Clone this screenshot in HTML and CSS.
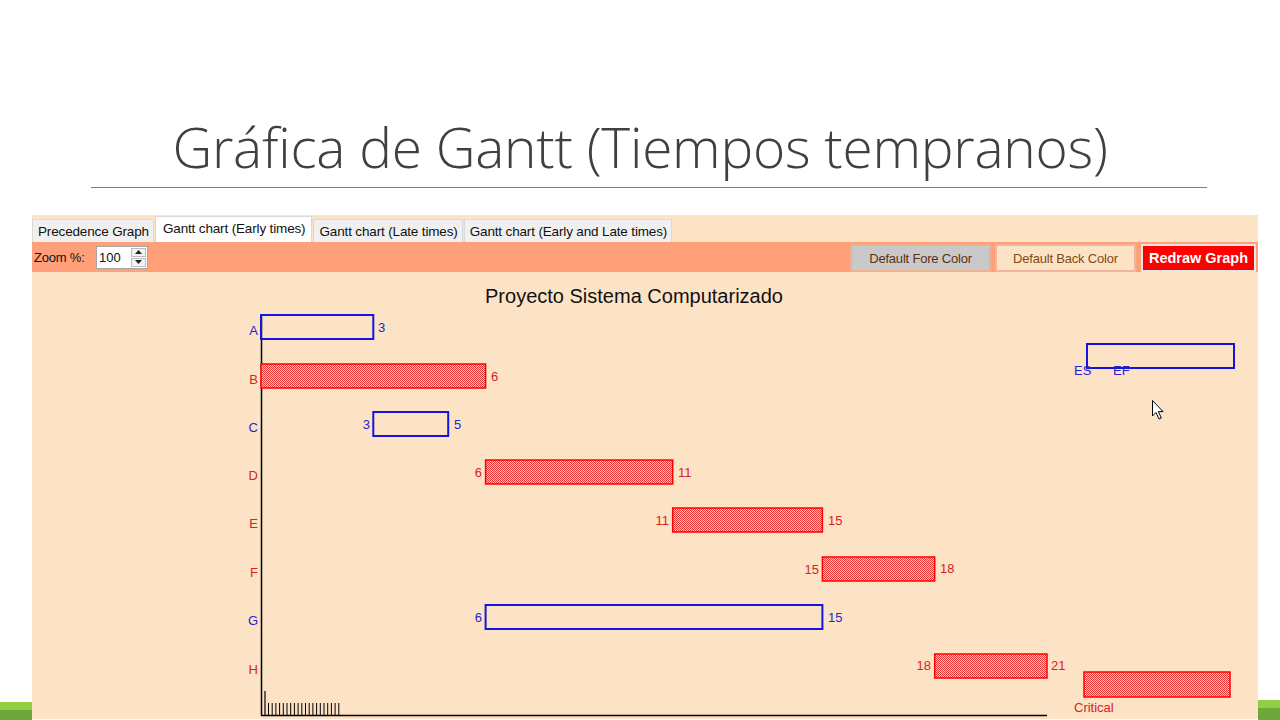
FILE: index.html
```html
<!DOCTYPE html>
<html lang="es">
<head>
<meta charset="utf-8">
<title>Gráfica de Gantt</title>
<link rel="stylesheet" href="styles.css">
</head>
<body>
<header class="slide-head">
  <h1 class="slide-title">Gráfica de Gantt (Tiempos tempranos)</h1>
</header>
<div class="divider"></div>

<section class="app">
  <div class="tabs">
    <div class="tab">Precedence Graph</div>
    <div class="tab tab-active">Gantt chart (Early times)</div>
    <div class="tab">Gantt chart (Late times)</div>
    <div class="tab">Gantt chart (Early and Late times)</div>
  </div>
  <div class="toolbar">
    <span class="zoom-label">Zoom %:</span>
    <div class="spin">
      <span class="spin-value">100</span>
      <div class="spin-btns">
        <span class="spin-btn"><svg width="7" height="4" viewBox="0 0 7 4"><path d="M0 4 L3.5 0 L7 4 Z" fill="#222"/></svg></span>
        <span class="spin-btn"><svg width="7" height="4" viewBox="0 0 7 4"><path d="M0 0 L3.5 4 L7 0 Z" fill="#222"/></svg></span>
      </div>
    </div>
    <div class="tool-spacer"></div>
    <button class="btn btn-fore">Default Fore Color</button>
    <button class="btn btn-back">Default Back Color</button>
    <button class="btn btn-redraw">Redraw Graph</button>
  </div>
  <div class="chart">
    <svg class="chart-svg" width="1226" height="447" viewBox="0 0 1226 447">
      <defs>
        <pattern id="hatch" width="2" height="2" patternUnits="userSpaceOnUse">
          <rect width="2" height="2" fill="#fcc8c0"/>
          <rect x="0" y="0" width="1" height="1" fill="#e63434"/>
          <rect x="1" y="1" width="1" height="1" fill="#e63434"/>
        </pattern>
      </defs>
      <text class="c-title" x="602" y="31" text-anchor="middle">Proyecto Sistema Computarizado</text>

      <!-- axes -->
      <line x1="229.5" y1="43" x2="229.5" y2="443.5" stroke="#000" stroke-width="1.5"/>
      <line x1="229" y1="443.5" x2="1015" y2="443.5" stroke="#000" stroke-width="1.5"/>
      <line x1="233" y1="419" x2="233" y2="443" stroke="#000" stroke-width="1.2"/>
      <g stroke="#000" stroke-width="1">
        <line x1="236.5" y1="431" x2="236.5" y2="443"/>
        <line x1="240.2" y1="431" x2="240.2" y2="443"/>
        <line x1="243.9" y1="431" x2="243.9" y2="443"/>
        <line x1="247.6" y1="431" x2="247.6" y2="443"/>
        <line x1="251.3" y1="431" x2="251.3" y2="443"/>
        <line x1="255" y1="431" x2="255" y2="443"/>
        <line x1="258.7" y1="431" x2="258.7" y2="443"/>
        <line x1="262.4" y1="431" x2="262.4" y2="443"/>
        <line x1="266.1" y1="431" x2="266.1" y2="443"/>
        <line x1="269.8" y1="431" x2="269.8" y2="443"/>
        <line x1="273.5" y1="431" x2="273.5" y2="443"/>
        <line x1="277.2" y1="431" x2="277.2" y2="443"/>
        <line x1="280.9" y1="431" x2="280.9" y2="443"/>
        <line x1="284.6" y1="431" x2="284.6" y2="443"/>
        <line x1="288.3" y1="431" x2="288.3" y2="443"/>
        <line x1="292" y1="431" x2="292" y2="443"/>
        <line x1="295.7" y1="431" x2="295.7" y2="443"/>
        <line x1="299.4" y1="431" x2="299.4" y2="443"/>
        <line x1="303.1" y1="431" x2="303.1" y2="443"/>
        <line x1="306.8" y1="431" x2="306.8" y2="443"/>
      </g>

      <!-- A -->
      <text class="lbl blue" x="226" y="63" text-anchor="end">A</text>
      <rect class="bar-n" x="229" y="43" width="112.3" height="24"/>
      <text class="num blue" x="346" y="60">3</text>
      <!-- B -->
      <text class="lbl red" x="226" y="112" text-anchor="end">B</text>
      <rect class="bar-c" x="229" y="92" width="224.6" height="24"/>
      <text class="num red" x="459" y="109">6</text>
      <!-- C -->
      <text class="lbl blue" x="226" y="160" text-anchor="end">C</text>
      <text class="num blue" x="338" y="157" text-anchor="end">3</text>
      <rect class="bar-n" x="341.3" y="140" width="74.9" height="24"/>
      <text class="num blue" x="422" y="157">5</text>
      <!-- D -->
      <text class="lbl red" x="226" y="208" text-anchor="end">D</text>
      <text class="num red" x="450" y="205" text-anchor="end">6</text>
      <rect class="bar-c" x="453.6" y="188" width="187.1" height="24"/>
      <text class="num red" x="646" y="205">11</text>
      <!-- E -->
      <text class="lbl red" x="226" y="256" text-anchor="end">E</text>
      <text class="num red" x="637" y="253" text-anchor="end">11</text>
      <rect class="bar-c" x="640.7" y="236" width="149.7" height="24"/>
      <text class="num red" x="796" y="253">15</text>
      <!-- F -->
      <text class="lbl red" x="226" y="305" text-anchor="end">F</text>
      <text class="num red" x="787" y="302" text-anchor="end">15</text>
      <rect class="bar-c" x="790.4" y="285" width="112.3" height="24"/>
      <text class="num red" x="908" y="301">18</text>
      <!-- G -->
      <text class="lbl blue" x="226" y="353" text-anchor="end">G</text>
      <text class="num blue" x="450" y="350" text-anchor="end">6</text>
      <rect class="bar-n" x="453.6" y="333" width="336.8" height="24"/>
      <text class="num blue" x="796" y="350">15</text>
      <!-- H -->
      <text class="lbl red" x="226" y="402" text-anchor="end">H</text>
      <text class="num red" x="899" y="398" text-anchor="end">18</text>
      <rect class="bar-c" x="902.7" y="382" width="112.3" height="24"/>
      <text class="num red" x="1019" y="398">21</text>

      <!-- legend -->
      <rect class="bar-n" x="1055" y="72" width="147" height="24"/>
      <text class="num blue" x="1042" y="103">ES</text>
      <text class="num blue" x="1081" y="103">EF</text>
      <rect class="bar-c" x="1052" y="400" width="146" height="25"/>
      <text class="num red" x="1042" y="440">Critical</text>

      <!-- mouse pointer -->
      <path d="M1120.5 128.5 L1120.5 144 L1124 140.5 L1127 147 L1129.3 146 L1126.4 139.6 L1131 139.6 Z" fill="#fff" stroke="#000" stroke-width="1" stroke-linejoin="round"/>
    </svg>
  </div>
</section>

<div class="deco deco-left"></div>
<div class="deco deco-right"></div>
</body>
</html>
```

FILE: styles.css
```css
html, body {
  margin: 0;
  padding: 0;
}
body {
  width: 1280px;
  height: 720px;
  overflow: hidden;
  background: #ffffff;
  position: relative;
  font-family: "Liberation Sans", Arial, sans-serif;
}

.slide-head {
  height: 187px;
  display: flex;
  flex-direction: column;
  justify-content: flex-end;
  align-items: center;
}
.slide-title {
  margin: 0 0 10px 0;
  font-family: "Open Sans", "Lato", sans-serif;
  font-weight: 300;
  font-size: 55px;
  line-height: 60px;
  color: #404040;
  letter-spacing: -0.25px;
  white-space: nowrap;
}
.divider {
  margin-left: 91px;
  width: 1116px;
  height: 0;
  border-top: 1px solid #808080;
}

.app {
  margin-top: 27px;
  margin-left: 32px;
  width: 1226px;
  background: #fde3c6;
}

.tabs {
  height: 27px;
  display: flex;
  align-items: flex-end;
  background: #fde3c6;
}
.tab {
  height: 23px;
  box-sizing: border-box;
  padding: 0 4px 0 5px;
  display: flex;
  align-items: center;
  font-size: 13.5px;
  color: #111;
  background: #f0f0f0;
  border: 1px solid #d9d9d9;
  border-bottom: none;
  margin-right: 1px;
  letter-spacing: -0.15px;
  white-space: nowrap;
}
.tab-active {
  height: 26px;
  background: #ffffff;
  padding: 0 6px 3px 7px;
  align-items: center;
}

.toolbar {
  height: 30px;
  background: #ffa07a;
  display: flex;
  align-items: center;
  padding-left: 2px;
}
.zoom-label {
  font-size: 13px;
  color: #111;
  width: 62px;
  letter-spacing: -0.2px;
}
.spin {
  width: 52px;
  height: 23px;
  box-sizing: border-box;
  background: #fff;
  border: 1px solid #a6a6a6;
  display: flex;
  align-items: center;
  justify-content: space-between;
}
.spin-value {
  font-size: 13px;
  color: #111;
  padding-left: 2px;
}
.spin-btns {
  display: flex;
  flex-direction: column;
  gap: 1px;
  margin-right: 1px;
}
.spin-btn {
  width: 15px;
  height: 9px;
  box-sizing: border-box;
  border: 1px solid #bcbcbc;
  background: #f3f3f3;
  display: flex;
  align-items: center;
  justify-content: center;
}
.tool-spacer {
  flex: 1;
}
.btn {
  height: 28px;
  box-sizing: border-box;
  font-family: "Liberation Sans", Arial, sans-serif;
  font-size: 13px;
  letter-spacing: -0.2px;
  padding: 0;
  margin: 0 4px 0 0;
  cursor: default;
  display: flex;
  align-items: center;
  justify-content: center;
  align-self: flex-end;
}
.btn-fore {
  width: 141px;
  background: #c9c9c9;
  color: #5e2f14;
  border: 2px solid #f0b08e;
}
.btn-back {
  width: 141px;
  background: #fde3c6;
  color: #7e4b12;
  border: 2px solid #f2b59a;
  margin-right: 5px;
}
.btn-redraw {
  width: 115px;
  background: #ff0000;
  color: #ffffff;
  font-weight: bold;
  border: 2px solid #e6e6e6;
  margin-right: 2px;
  letter-spacing: 0;
  font-size: 14.5px;
}

.chart {
  height: 447px;
  background: #fde3c6;
}
.chart-svg {
  display: block;
}
.c-title {
  font-family: "Liberation Sans", Arial, sans-serif;
  font-size: 20px;
  fill: #111;
}
.lbl, .num {
  font-family: "Liberation Sans", Arial, sans-serif;
  font-size: 13px;
}
.blue { fill: #2424d0; }
.red { fill: #dc2020; }
.bar-n {
  fill: none;
  stroke: #1515e0;
  stroke-width: 2;
}
.bar-c {
  fill: url(#hatch);
  stroke: #ff0000;
  stroke-width: 1.5;
}

.deco {
  position: absolute;
  bottom: 0;
  background: linear-gradient(#92cd45 0, #92cd45 42%, #6fa83a 42%, #6fa83a 100%);
}
.deco-left {
  left: 0;
  width: 32px;
  height: 18px;
}
.deco-right {
  right: 0;
  width: 22px;
  height: 20px;
}
```
